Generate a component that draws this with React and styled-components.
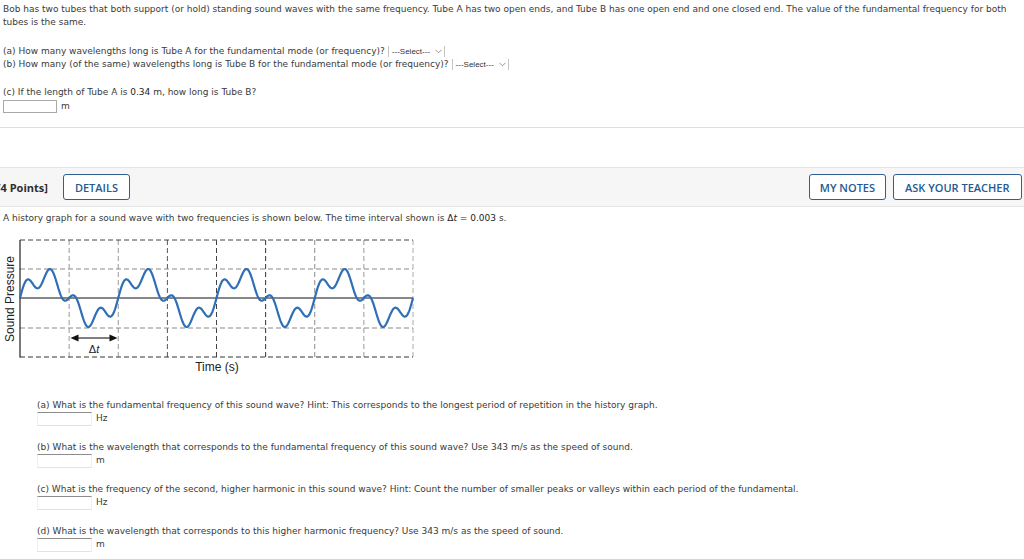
import React from "react";
import styled, { createGlobalStyle } from "styled-components";

const GlobalStyle = createGlobalStyle`
  body {
    margin: 0;
    background: #fff;
    font-family: "DejaVu Sans", Verdana, sans-serif;
    font-size: 9px;
    color: #3a3a3a;
  }
`;

const Page = styled.div`
  width: 1024px;
  overflow: hidden;
`;

const Intro = styled.div`
  padding: 2.5px 3px 0;
  line-height: 13px;
`;

const QuestionGroup = styled.div`
  margin-top: ${({ $top }) => $top}px;
  padding: 0 3px;
  line-height: 13px;
`;

const Line = styled.div`
  display: flex;
  align-items: center;
  white-space: nowrap;
`;

const Value = styled.span`
  color: #1e1e1e;
`;

const SelectBox = styled.span`
  display: inline-flex;
  align-items: center;
  gap: 5px;
  height: 11px;
  margin-left: 3px;
  padding: 0 2px 0 3px;
  border-left: 1px solid #c4c4c4;
  border-right: 1px solid #c4c4c4;
  font-family: "Liberation Sans", Arial, sans-serif;
  font-size: 8px;
  color: #333;
`;

const AnswerRow = styled.div`
  display: flex;
  align-items: center;
  gap: 4px;
  margin-top: ${({ $top }) => $top || 0}px;
`;

const BoxInput = styled.div`
  width: 54px;
  height: 13px;
  box-sizing: border-box;
  border: 1px solid #a9a9a9;
`;

const Divider = styled.div`
  margin-top: 14px;
  height: 1px;
  background: #dedede;
`;

const Toolbar = styled.div`
  margin-top: 39px;
  height: 38px;
  display: flex;
  align-items: center;
  background: #f6f6f6;
  border-top: 1px solid #e4e4e4;
  border-bottom: 1px solid #e4e4e4;
`;

const Points = styled.span`
  margin-left: -4px;
  font-family: "Open Sans", sans-serif;
  font-weight: 700;
  font-size: 11px;
  color: #2e2e2e;
`;

const ToolButton = styled.button`
  height: 26px;
  box-sizing: border-box;
  padding: 0 ${({ $pad }) => $pad || 11}px;
  margin-left: ${({ $gap }) => $gap}px;
  border: 1px solid #2f5f92;
  border-radius: 3px;
  background: #fff;
  font-family: "Open Sans", sans-serif;
  font-weight: 600;
  font-size: 11px;
  color: #245a92;
`;

const Spacer = styled.div`
  flex: 1;
`;

const Prompt = styled.div`
  margin-top: 4.5px;
  padding: 0 3px;
  line-height: 13px;
`;

const Graph = styled.svg`
  display: block;
`;

const Questions = styled.div`
  padding-left: 37px;
  line-height: 13px;
`;

const Question = styled.div`
  margin-bottom: 14.5px;
`;

const UnitInput = styled.div`
  width: 55px;
  height: 14px;
  box-sizing: border-box;
  margin-top: 0.5px;
  border-top: 1px solid #8c8c8c;
  border-left: 1px solid #f0f0f0;
  border-right: 1px solid #f0f0f0;
  border-bottom: 1px solid #e2e2e2;
`;

const Unit = styled.span`
  color: #3a3a3a;
`;

const Chevron = () => (
  <svg width="7" height="5" viewBox="0 0 7 5">
    <path d="M0.5 0.8 L3.5 3.8 L6.5 0.8" fill="none" stroke="#8a8a8a" strokeWidth="0.9" />
  </svg>
);

const X0 = 20;
const X1 = 413;
const MID = 298;

const wavePath = () => {
  const period = (X1 - X0) / 4;
  const f = (t) => Math.sin(t) + 0.45 * Math.sin(4 * t);
  let max = 0;
  for (let i = 0; i <= 2000; i++) {
    const v = Math.abs(f((i / 2000) * 2 * Math.PI));
    if (v > max) max = v;
  }
  const pts = [];
  for (let x = X0; x <= X1 + 0.01; x += 0.5) {
    const t = (2 * Math.PI * (x - X0)) / period;
    pts.push(`${x.toFixed(1)},${(MID - (29 * f(t)) / max).toFixed(2)}`);
  }
  return "M" + pts.join(" L");
};

const columns = Array.from({ length: 8 }, (_, i) => X0 + (i + 1) * ((X1 - X0) / 8));
const columnTone = ["#9a9a9a", "#9a9a9a", "#555", "#444", "#333", "#8a8a8a", "#9a9a9a", "#aaa"];

const HistoryGraph = () => (
  <Graph width="420" height="174" viewBox="0 225 420 174">
    {columns.map((x, i) => (
      <line key={x} x1={x} y1="240" x2={x} y2="357" stroke={columnTone[i]} strokeWidth="1" strokeDasharray="5 3" />
    ))}
    <line x1={X0} y1="240" x2={X1} y2="240" stroke="#444" strokeDasharray="5 3" />
    <line x1={X0} y1="269" x2={X1} y2="269" stroke="#888" strokeDasharray="5 3" />
    <line x1={X0} y1="328" x2={X1} y2="328" stroke="#888" strokeDasharray="5 3" />
    <line x1={X0} y1="357" x2={X1} y2="357" stroke="#333" strokeDasharray="5 3" />
    <line x1={X0} y1="240" x2={X0} y2="357.5" stroke="#222" strokeWidth="1.2" />
    <line x1={X0} y1={MID} x2={X1} y2={MID} stroke="#111" strokeWidth="1" />
    <path d={wavePath()} fill="none" stroke="#2f6fb6" strokeWidth="2.2" strokeLinejoin="round" />
    <line x1="76" y1="338" x2="112" y2="338" stroke="#555" strokeWidth="1.6" />
    <polygon points="70.5,338 78.5,334.5 78.5,341.5" fill="#111" />
    <polygon points="117.5,338 109.5,334.5 109.5,341.5" fill="#111" />
    <text x="94" y="352.5" textAnchor="middle" fontFamily="Liberation Sans, Arial, sans-serif" fontSize="11" fill="#222">
      Δ<tspan fontStyle="italic">t</tspan>
    </text>
    <text
      x="14"
      y="299"
      transform="rotate(-90 14 299)"
      textAnchor="middle"
      fontFamily="Liberation Sans, Arial, sans-serif"
      fontSize="12"
      fill="#222"
    >
      Sound Pressure
    </text>
    <text x="217" y="371" textAnchor="middle" fontFamily="Liberation Sans, Arial, sans-serif" fontSize="12" fill="#222">
      Time (s)
    </text>
  </Graph>
);

const parts = [
  {
    text: "(a) What is the fundamental frequency of this sound wave? Hint: This corresponds to the longest period of repetition in the history graph.",
    unit: "Hz",
  },
  {
    text: "(b) What is the wavelength that corresponds to the fundamental frequency of this sound wave? Use 343 m/s as the speed of sound.",
    unit: "m",
  },
  {
    text: "(c) What is the frequency of the second, higher harmonic in this sound wave? Hint: Count the number of smaller peaks or valleys within each period of the fundamental.",
    unit: "Hz",
  },
  {
    text: "(d) What is the wavelength that corresponds to this higher harmonic frequency? Use 343 m/s as the speed of sound.",
    unit: "m",
  },
];

export default function App() {
  return (
    <Page>
      <GlobalStyle />
      <Intro>
        Bob has two tubes that both support (or hold) standing sound waves with the same frequency. Tube A has two open
        ends, and Tube B has one open end and one closed end. The value of the fundamental frequency for both tubes is the
        same.
      </Intro>

      <QuestionGroup $top={16}>
        <Line>
          (a) How many wavelengths long is Tube A for the fundamental mode (or frequency)?
          <SelectBox>
            ---Select--- <Chevron />
          </SelectBox>
        </Line>
        <Line>
          (b) How many (of the same) wavelengths long is Tube B for the fundamental mode (or frequency)?
          <SelectBox>
            ---Select--- <Chevron />
          </SelectBox>
        </Line>
      </QuestionGroup>

      <QuestionGroup $top={15}>
        <Line>
          (c) If the length of Tube A is&nbsp;<Value>0.34</Value>&nbsp;m, how long is Tube B?
        </Line>
        <AnswerRow $top={1.5}>
          <BoxInput />
          <Unit>m</Unit>
        </AnswerRow>
      </QuestionGroup>

      <Divider />

      <Toolbar>
        <Points>/4 Points]</Points>
        <ToolButton $gap={15}>DETAILS</ToolButton>
        <Spacer />
        <ToolButton $gap={0} $pad={9.5}>
          MY NOTES
        </ToolButton>
        <ToolButton $gap={7} $pad={11.5} style={{ marginRight: 2 }}>
          ASK YOUR TEACHER
        </ToolButton>
      </Toolbar>

      <Prompt>
        A history graph for a sound wave with two frequencies is shown below. The time interval shown is{" "}
        <Value>
          Δ<i>t</i> = 0.003
        </Value>{" "}
        s.
      </Prompt>

      <HistoryGraph />

      <Questions>
        {parts.map((p) => (
          <Question key={p.text}>
            <div>{p.text}</div>
            <AnswerRow>
              <UnitInput />
              <Unit>{p.unit}</Unit>
            </AnswerRow>
          </Question>
        ))}
      </Questions>
    </Page>
  );
}
